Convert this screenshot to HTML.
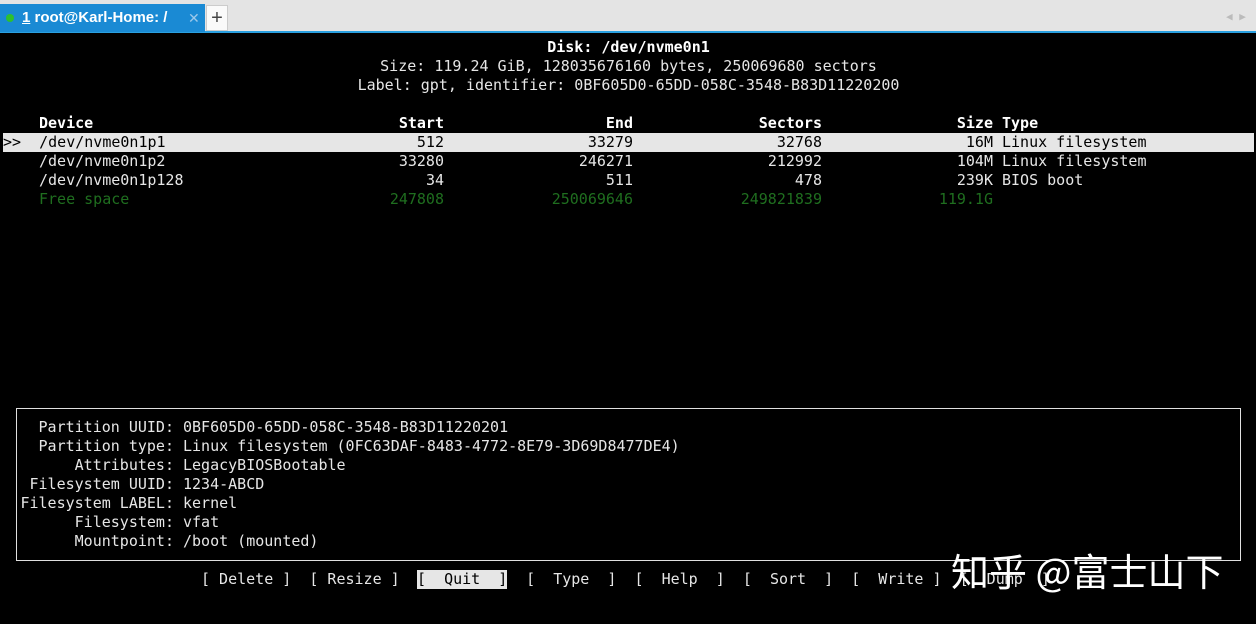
<!DOCTYPE html>
<html><head><meta charset="utf-8"><style>
*{margin:0;padding:0;box-sizing:border-box}
body{width:1256px;height:624px;background:#000;position:relative;overflow:hidden;font-family:"DejaVu Sans Mono","Liberation Mono",monospace;font-size:15px;color:#e6e6e6}
.bar{position:absolute;left:0;top:0;width:1256px;height:31px;background:#e4e4e4}
.bl{position:absolute;left:0;top:31px;width:1256px;height:2px;background:#2aa0e0}
.tab{position:absolute;left:0;top:4px;width:205px;height:28px;background:#1a8ad4;color:#fff;font-family:"Liberation Sans",sans-serif;font-weight:bold;font-size:15px;line-height:28px;padding-left:22px}
.dot{position:absolute;left:6px;top:10px;width:8px;height:8px;border-radius:50%;background:#2ec02e}
.x{position:absolute;left:188px;top:0;color:#9cc8ea;font-weight:normal;font-size:14px}
.plus{position:absolute;left:206px;top:5px;width:22px;height:26px;background:#fafafa;border:1px solid #ccc;color:#444;font-family:"Liberation Sans",sans-serif;font-size:20px;line-height:24px;text-align:center}
.w{position:absolute;left:0;top:1px;width:1256px;height:623px}
.l{position:absolute;height:19px;line-height:19px;white-space:pre}
.r{text-align:right}
.b{font-weight:bold;color:#fff}
.hl{position:absolute;left:3px;top:132px;width:1251px;height:19px;background:#e6e6e6}
.box{position:absolute;left:16px;top:407px;width:1225px;height:153px;border:1px solid #e0e0e0}
.g{color:#1f6e1f}
.wm{position:absolute;left:951px;top:545px;color:#fff;font-family:"Noto Sans CJK SC",sans-serif;font-size:38px;line-height:50px;white-space:nowrap}
</style></head><body>
<div class="bar"></div><div class="bl"></div>
<div class="tab"><span class="dot"></span><u>1</u> root@Karl-Home: /<span class="x">✕</span></div>
<div class="plus">+</div>
<div style="position:absolute;left:1226px;top:10px;color:#bbb;font-size:11px">◀ ▶</div>
<div class="w">
<div class="l b" style="left:3px;width:1251px;top:37px;text-align:center">Disk: /dev/nvme0n1</div>
<div class="l" style="left:3px;width:1251px;top:56px;text-align:center">Size: 119.24 GiB, 128035676160 bytes, 250069680 sectors</div>
<div class="l" style="left:3px;width:1251px;top:75px;text-align:center">Label: gpt, identifier: 0BF605D0-65DD-058C-3548-B83D11220200</div>

<div class="l b" style="left:39px;top:113px">Device</div>
<div class="l b r" style="left:3px;width:441px;top:113px">Start</div>
<div class="l b r" style="left:3px;width:630px;top:113px">End</div>
<div class="l b r" style="left:3px;width:819px;top:113px">Sectors</div>
<div class="l b r" style="left:3px;width:990px;top:113px">Size</div>
<div class="l b" style="left:1002px;top:113px">Type</div>

<div class="hl"></div>
<div class="l" style="left:3px;top:132px;color:#000">&gt;&gt;  /dev/nvme0n1p1</div>
<div class="l r" style="left:3px;width:441px;top:132px;color:#000">512</div>
<div class="l r" style="left:3px;width:630px;top:132px;color:#000">33279</div>
<div class="l r" style="left:3px;width:819px;top:132px;color:#000">32768</div>
<div class="l r" style="left:3px;width:990px;top:132px;color:#000">16M</div>
<div class="l" style="left:1002px;top:132px;color:#000">Linux filesystem</div>

<div class="l" style="left:39px;top:151px">/dev/nvme0n1p2</div>
<div class="l r" style="left:3px;width:441px;top:151px">33280</div>
<div class="l r" style="left:3px;width:630px;top:151px">246271</div>
<div class="l r" style="left:3px;width:819px;top:151px">212992</div>
<div class="l r" style="left:3px;width:990px;top:151px">104M</div>
<div class="l" style="left:1002px;top:151px">Linux filesystem</div>

<div class="l" style="left:39px;top:170px">/dev/nvme0n1p128</div>
<div class="l r" style="left:3px;width:441px;top:170px">34</div>
<div class="l r" style="left:3px;width:630px;top:170px">511</div>
<div class="l r" style="left:3px;width:819px;top:170px">478</div>
<div class="l r" style="left:3px;width:990px;top:170px">239K</div>
<div class="l" style="left:1002px;top:170px">BIOS boot</div>

<div class="l g" style="left:39px;top:189px">Free space</div>
<div class="l r g" style="left:3px;width:441px;top:189px">247808</div>
<div class="l r g" style="left:3px;width:630px;top:189px">250069646</div>
<div class="l r g" style="left:3px;width:819px;top:189px">249821839</div>
<div class="l r g" style="left:3px;width:990px;top:189px">119.1G</div>

<div class="box"></div>
<div class="l r" style="left:3px;width:171px;top:417px">Partition UUID:</div><div class="l" style="left:183px;top:417px">0BF605D0-65DD-058C-3548-B83D11220201</div>
<div class="l r" style="left:3px;width:171px;top:436px">Partition type:</div><div class="l" style="left:183px;top:436px">Linux filesystem (0FC63DAF-8483-4772-8E79-3D69D8477DE4)</div>
<div class="l r" style="left:3px;width:171px;top:455px">Attributes:</div><div class="l" style="left:183px;top:455px">LegacyBIOSBootable</div>
<div class="l r" style="left:3px;width:171px;top:474px">Filesystem UUID:</div><div class="l" style="left:183px;top:474px">1234-ABCD</div>
<div class="l r" style="left:3px;width:171px;top:493px">Filesystem LABEL:</div><div class="l" style="left:183px;top:493px">kernel</div>
<div class="l r" style="left:3px;width:171px;top:512px">Filesystem:</div><div class="l" style="left:183px;top:512px">vfat</div>
<div class="l r" style="left:3px;width:171px;top:531px">Mountpoint:</div><div class="l" style="left:183px;top:531px">/boot (mounted)</div>

<div class="l" style="left:201px;top:569px">[ Delete ]  [ Resize ]              [  Type  ]  [  Help  ]  [  Sort  ]  [  Write ]  [  Dump  ]</div>
<div class="l" style="left:417px;top:569px;width:90px;background:#e6e6e6;color:#000">[  Quit  ]</div>
</div>
<div class="wm">知乎 @富士山下</div>
</body></html>
